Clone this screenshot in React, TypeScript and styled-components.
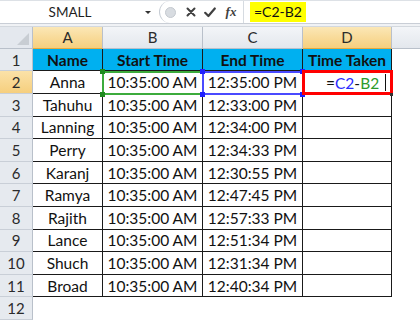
import { Fragment } from 'react';
import styled, { createGlobalStyle } from 'styled-components';

const GlobalStyle = createGlobalStyle`
  html, body {
    margin: 0;
    padding: 0;
    background: #ffffff;
  }
  body {
    font-family: Lato, "Open Sans", sans-serif;
  }
`;

const Page = styled.div`
  width: 420px;
  height: 320px;
  overflow: hidden;
  display: flex;
  flex-direction: column;
  background: #ffffff;
`;

const FormulaBar = styled.div`
  display: flex;
  align-items: center;
  height: 25px;
  border-top: 1px solid #dde1e6;
  border-bottom: 1px solid #c9ced6;
  box-sizing: border-box;
  background: #ffffff;
`;

const NameBox = styled.div`
  width: 140px;
  display: flex;
  align-items: center;
  justify-content: center;
  font-family: Lato, sans-serif;
  font-size: 13.5px;
  color: #1e1e1e;
`;

const DropArrow = styled.div`
  width: 0;
  height: 0;
  margin: 0 8px 0 5px;
  border-left: 3px solid transparent;
  border-right: 3px solid transparent;
  border-top: 3px solid #333;
`;

const ButtonGroup = styled.div`
  display: flex;
  align-items: center;
  gap: 8px;
  height: 22px;
  padding: 0 5px 0 5px;
  border-left: 1px solid #c6ccd4;
  border-radius: 11px 0 0 11px;
  border-right: 1px solid #d6dbe1;
`;

const Dot = styled.div`
  width: 9px;
  height: 9px;
  border-radius: 50%;
  background: #d8dce1;
  border: 1px solid #c4c9cf;
  margin-right: 2px;
`;

const IconBtn = styled.div<{ $w: number }>`
  width: ${(p) => p.$w}px;
  height: 16px;
  display: flex;
  align-items: center;
  justify-content: center;
  color: #404040;
`;

const FxText = styled.span`
  font-family: "Liberation Serif", serif;
  font-style: italic;
  font-size: 13px;
  color: #404040;
  font-weight: bold;
`;

const FormulaInput = styled.div`
  flex: 1;
  display: flex;
  align-items: center;
  height: 100%;
  padding-left: 6px;
`;

const Highlight = styled.span`
  background: #ffff00;
  font-family: Lato, sans-serif;
  font-size: 14px;
  color: #111;
  padding: 2px 4px;
  line-height: 16px;
`;

const Gap = styled.div`
  height: 3px;
  background: #f0f2f5;
  border-bottom: 1px solid #d3d8de;
`;

const Sheet = styled.div`
  position: relative;
  display: grid;
  grid-template-columns: 33px 70px 100px 100px 89px 1fr;
  grid-template-rows: 22px repeat(12, 22.6px);
`;

const Corner = styled.div`
  background: #e4e8ee;
  border-right: 1px solid #b9c0ca;
  border-bottom: 1px solid #b9c0ca;
  position: relative;
  &::after {
    content: '';
    position: absolute;
    right: 3px;
    bottom: 3px;
    width: 0;
    height: 0;
    border-left: 12px solid transparent;
    border-bottom: 12px solid #c8cdd3;
  }
`;

const ColHead = styled.div<{ $active?: boolean }>`
  display: flex;
  align-items: center;
  justify-content: center;
  font-size: 15px;
  color: #2b2b2b;
  background: ${(p) =>
    p.$active
      ? 'linear-gradient(#fbe7b6, #f6cf7e)'
      : 'linear-gradient(#f3f5f8, #e3e7ed)'};
  border-right: 1px solid #b9c0ca;
  border-bottom: 1px solid ${(p) => (p.$active ? '#e5a93e' : '#b9c0ca')};
  box-sizing: border-box;
`;

const BlankHead = styled.div`
  background: linear-gradient(#f3f5f8, #e3e7ed);
  border-bottom: 1px solid #b9c0ca;
`;

const RowHead = styled.div<{ $active?: boolean }>`
  display: flex;
  align-items: center;
  justify-content: center;
  font-size: 15px;
  color: #2b2b2b;
  background: ${(p) =>
    p.$active ? 'linear-gradient(#fbe2a8, #f6cf7e)' : '#e6eaef'};
  border-right: 1px solid #b9c0ca;
  border-bottom: 1px solid #c9cfd7;
  box-sizing: border-box;
`;

const Cell = styled.div<{ $head?: boolean }>`
  display: flex;
  align-items: center;
  justify-content: center;
  font-size: 15.5px;
  font-weight: ${(p) => (p.$head ? 700 : 400)};
  color: #111;
  background: ${(p) => (p.$head ? '#00b0f0' : '#ffffff')};
  border-right: 1px solid #1a1a1a;
  border-bottom: 1px solid #1a1a1a;
  box-sizing: border-box;
  white-space: nowrap;
  overflow: hidden;
`;

const Empty = styled.div`
  background: #ffffff;
`;

const Mark = styled.div<{ $color: string; $w: number }>`
  position: absolute;
  box-sizing: border-box;
  border: ${(p) => p.$w}px solid ${(p) => p.$color};
  pointer-events: none;
`;

const Handle = styled.div<{ $color: string }>`
  position: absolute;
  width: 5px;
  height: 5px;
  background: ${(p) => p.$color};
`;

const EditText = styled.div`
  position: absolute;
  display: flex;
  align-items: center;
  font-size: 15.5px;
  color: #111;
`;

const Ref = styled.span<{ $color: string }>`
  color: ${(p) => p.$color};
`;

const Caret = styled.span`
  display: inline-block;
  width: 1px;
  height: 17px;
  background: #111;
  margin-left: 6px;
`;

const rows = [
  ['Anna', '10:35:00 AM', '12:35:00 PM'],
  ['Tahuhu', '10:35:00 AM', '12:33:00 PM'],
  ['Lanning', '10:35:00 AM', '12:34:00 PM'],
  ['Perry', '10:35:00 AM', '12:34:33 PM'],
  ['Karanj', '10:35:00 AM', '12:30:55 PM'],
  ['Ramya', '10:35:00 AM', '12:47:45 PM'],
  ['Rajith', '10:35:00 AM', '12:57:33 PM'],
  ['Lance', '10:35:00 AM', '12:51:34 PM'],
  ['Shuch', '10:35:00 AM', '12:31:34 PM'],
  ['Broad', '10:35:00 AM', '12:40:34 PM'],
];

const Cross = () => (
  <svg width="10" height="10" viewBox="0 0 10 10">
    <path d="M1.5 1.5 L8.5 8.5 M8.5 1.5 L1.5 8.5" stroke="#404040" strokeWidth="2" strokeLinecap="round" />
  </svg>
);

const Check = () => (
  <svg width="12" height="11" viewBox="0 0 12 11">
    <path d="M1.2 5.8 L4.4 9 L10.8 1.5" stroke="#404040" strokeWidth="2.2" fill="none" strokeLinecap="round" strokeLinejoin="round" />
  </svg>
);

const App = () => {
  return (
    <Page>
      <GlobalStyle />
      <FormulaBar>
        <NameBox>SMALL</NameBox>
        <DropArrow />
        <ButtonGroup>
          <Dot />
          <IconBtn $w={10}>
            <Cross />
          </IconBtn>
          <IconBtn $w={12}>
            <Check />
          </IconBtn>
          <IconBtn $w={14}>
            <FxText>fx</FxText>
          </IconBtn>
        </ButtonGroup>
        <FormulaInput>
          <Highlight>=C2-B2</Highlight>
        </FormulaInput>
      </FormulaBar>
      <Gap />
      <Sheet>
        <Corner />
        <ColHead $active>A</ColHead>
        <ColHead>B</ColHead>
        <ColHead>C</ColHead>
        <ColHead $active>D</ColHead>
        <BlankHead />

        <RowHead>1</RowHead>
        <Cell $head>Name</Cell>
        <Cell $head>Start Time</Cell>
        <Cell $head>End Time</Cell>
        <Cell $head>Time Taken</Cell>
        <Empty />

        {rows.map(([name, start, end], i) => (
          <Fragment key={name}>
            <RowHead $active={i === 0}>{i + 2}</RowHead>
            <Cell>{name}</Cell>
            <Cell>{start}</Cell>
            <Cell>{end}</Cell>
            <Cell />
            <Empty />
          </Fragment>
        ))}

        <RowHead>12</RowHead>
        <Empty />
        <Empty />
        <Empty />
        <Empty />
        <Empty />

        <Mark $color="#3cab3c" $w={2} style={{ left: 102, top: 44.6, width: 102, height: 23.6 }} />
        <Handle $color="#1e8a1e" style={{ left: 100, top: 42.6 }} />
        <Handle $color="#1e8a1e" style={{ left: 100, top: 65.2 }} />
        <Handle $color="#1e8a1e" style={{ left: 200, top: 65.2 }} />
        <Mark $color="#4a4aff" $w={2} style={{ left: 202, top: 44.6, width: 102, height: 23.6 }} />
        <Handle $color="#2020ff" style={{ left: 200, top: 42.6 }} />
        <Handle $color="#2020ff" style={{ left: 300, top: 42.6 }} />
        <Handle $color="#2020ff" style={{ left: 300, top: 65.2 }} />
        <Handle $color="#2020ff" style={{ left: 200, top: 65.2 }} />
        <Mark $color="#ff0000" $w={3} style={{ left: 302, top: 43, width: 91, height: 25 }} />
        <Handle $color="#333" style={{ left: 390, top: 66, width: 3, height: 3 }} />
        <EditText style={{ left: 326, top: 44.6, height: 22.6 }}>
          =<Ref $color="#2b2bff">C2</Ref>-<Ref $color="#2c9a2c">B2</Ref>
          <Caret />
        </EditText>
      </Sheet>
    </Page>
  );
};

export default App;
